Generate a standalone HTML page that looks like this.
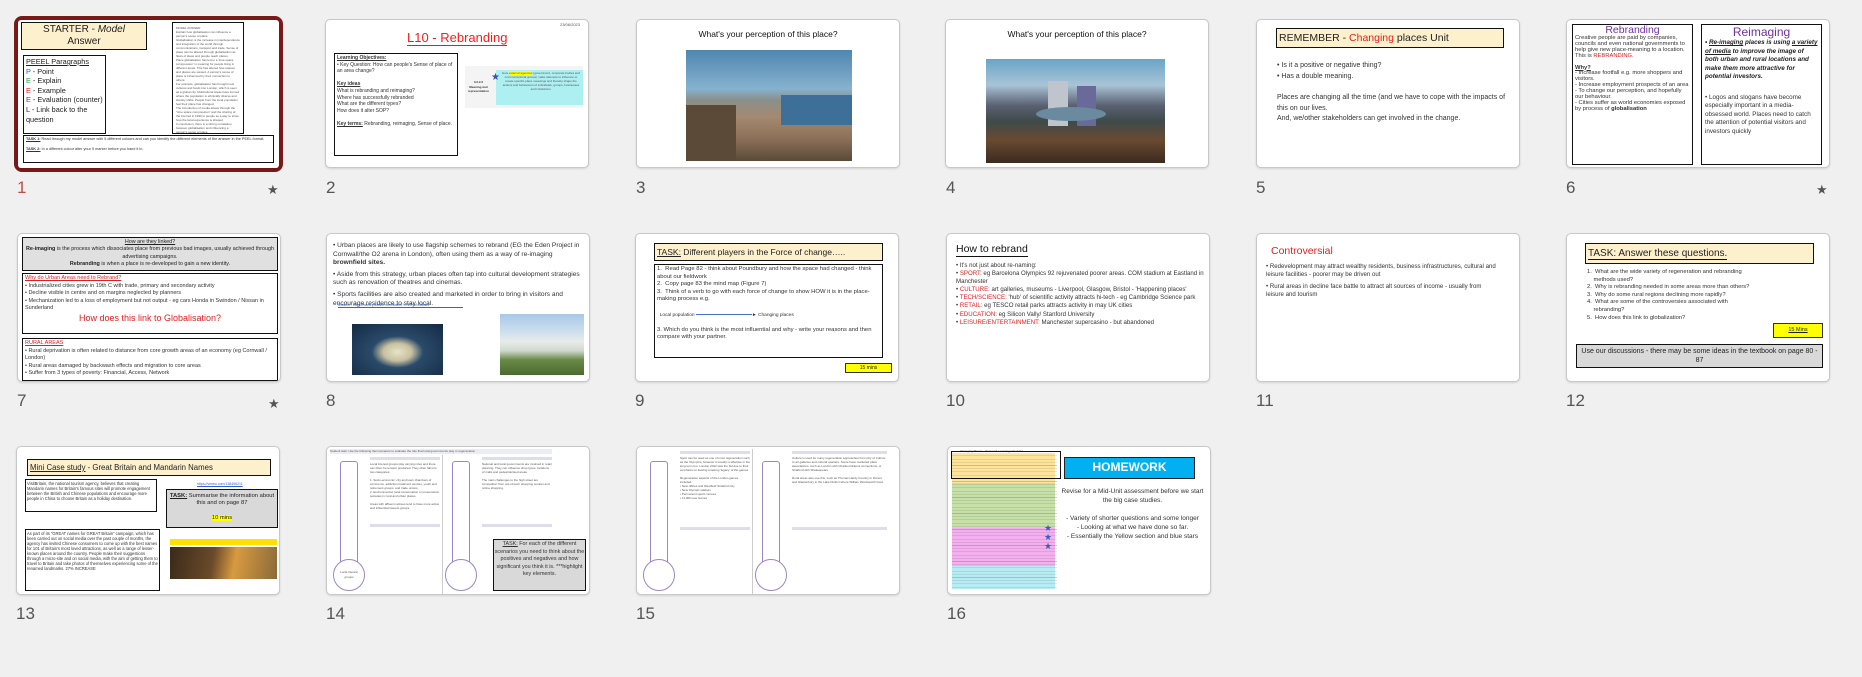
<!DOCTYPE html>
<html><head><meta charset="utf-8"><style>
*{margin:0;padding:0;box-sizing:border-box}
body{width:1862px;height:677px;background:#f0f0f0;font-family:"Liberation Sans",sans-serif;position:relative;overflow:hidden;color:#222}
.s{position:absolute;width:264px;height:149px;background:#fff;border:1px solid #c8c8c8;border-radius:5px;box-shadow:0 1px 2px rgba(0,0,0,.12);overflow:hidden}
.a{position:absolute}
.n{position:absolute;font-size:17px;color:#555}
.st{position:absolute;font-size:13px;color:#555}
.bx{position:absolute;border:1.5px solid #111;overflow:hidden}
.tiny{font-size:3.5px;line-height:4.5px;color:#555}
.r{color:#e02020}
</style></head><body>

<div class="a" style="left:14px;top:16px;width:269px;height:156px;border:4px solid #7b1818;border-radius:8px"></div>

<!-- ROW 1 -->
<div class="s" style="left:18px;top:20px;width:261px;height:148px;border:none;border-radius:3px">
 <div class="bx" style="left:3px;top:2px;width:126px;height:28px;background:#fdf0cc;font-size:10px;line-height:12px;text-align:center;padding-top:1px">STARTER - <i>Model</i><br>Answer</div>
 <div class="bx" style="left:5px;top:35px;width:83px;height:79px;font-size:7.3px;line-height:9.6px;padding:1px 2px">
  <u>PEEEL Paragraphs</u><br><span style="color:#2266cc">P</span> - Point<br><span style="color:#22aa44">E</span> - Explain<br><span class="r">E</span> - Example<br><span style="color:#7030a0">E</span> - Evaluation (counter)<br>L - Link back to the question</div>
 <div class="bx" style="left:154px;top:2px;width:72px;height:112px;border-width:1px;padding:3px">
  <div class="tiny" style="font-size:3px;line-height:4px">MODEL ANSWER<br>Explain how globalisation can influence a person's sense of place.<br>Globalisation is the increase in interdependence and integration of the world through communications, transport and trade. Sense of place can be altered through globalisation as flows of ideas and people reach places.<br>Place globalisation has led to a 'time-space compression' in meaning for people living in different areas. This has altered how spaces and places are viewed. A person's sense of place is influenced by their connection to others.<br>For example, globalisation has brought new cultures and foods into London, which is seen as a global city. Multicultural areas have formed where the population is ethnically diverse and identity shifts. People from the local population feel their place has changed.<br>The introduction of media allows through the "time space compression" and the sharing of the internet in 1990 to people as a way to show how the local experience is shaped.<br>In conclusion, there is a strong correlation between globalisation and influencing a person's sense of place.</div></div>
 <div class="bx" style="left:5px;top:115px;width:251px;height:28px;padding:1px 2px"><div class="tiny" style="font-size:3.8px;line-height:4.8px;color:#333"><u><b>TASK 1:</b></u> Read through my model answer with 5 different colours and can you identify the different elements of the answer in the PEEL format.<br><br><u><b>TASK 2:</b></u> In a different colour alter your 9 marker before you hand it in.</div></div>
</div>
<div class="n" style="left:17px;top:178px;color:#c0504d">1</div>
<div class="st" style="left:267px;top:182px">★</div>

<div class="s" style="left:325px;top:19px">
 <div class="a tiny" style="right:8px;top:3px;font-size:4px">23/06/2023</div>
 <div class="a" style="left:81px;top:10px;font-size:13px;color:#ff1a1a;border-bottom:1px solid #e02020;line-height:15px">L10 - Rebranding</div>
 <div class="bx" style="left:8px;top:33px;width:124px;height:103px;padding:1px 2px;font-size:5px;line-height:6.6px;color:#333">
  <u><b>Learning Objectives:</b></u><br>• Key Question: How can people's Sense of place of an area change?<br><br><u><b>Key ideas</b></u><br>What is rebranding and reimaging?<br>Where has successfully rebranded<br>What are the different types?<br>How does it alter SOP?<br><br><u><b>Key terms:</b></u> Rebranding, reimaging, Sense of place.</div>
 <div class="a" style="left:139px;top:46px;width:118px;height:42px;background:#f4f4f4">
  <div class="a" style="left:31px;top:4px;width:87px;height:35px;background:#aef0f2"></div>
  <div class="a tiny" style="left:3px;top:14px;font-size:3px;text-align:center;font-weight:bold;color:#333">3.2.2.2<br>Meaning and<br>representation</div>
  <div class="a" style="left:26px;top:6px;color:#3355aa;font-size:10px">★</div>
  <div class="a tiny" style="left:36px;top:5px;width:80px;font-size:3px;line-height:4px;text-align:center">How <span style="background:#ff0">external agencies</span> (government, corporate bodies and community/local groups) make attempts to influence or create specific place meanings and thereby shape the actions and behaviours of individuals, groups, businesses and institutions.</div>
 </div>
</div>
<div class="n" style="left:326px;top:178px">2</div>

<div class="s" style="left:636px;top:19px">
 <div class="a" style="left:0;width:100%;top:9px;text-align:center;font-size:8.5px;color:#111">What's your perception of this place?</div>
 <div class="a" style="left:49px;top:30px;width:166px;height:111px;background:linear-gradient(180deg,#4f86b0 0%,#86b2cf 35%,#8a8f8c 45%,#a48a70 60%,#8c7058 80%,#5a4a3a 100%)">
  <div class="a" style="left:95px;top:45px;width:71px;height:30px;background:#3d6f98"></div>
  <div class="a" style="left:0;top:55px;width:50px;height:56px;background:#5b4a38"></div>
 </div>
</div>
<div class="n" style="left:636px;top:178px">3</div>

<div class="s" style="left:945px;top:19px">
 <div class="a" style="left:0;width:100%;top:9px;text-align:center;font-size:8.5px;color:#111">What's your perception of this place?</div>
 <div class="a" style="left:40px;top:39px;width:179px;height:104px;background:linear-gradient(180deg,#6aa4c8 0%,#a8c4d6 25%,#5a6070 45%,#3e4a4a 60%,#6a4a30 78%,#3a2a20 100%)">
  <div class="a" style="left:62px;top:22px;width:20px;height:45px;background:#c0c4cc"></div>
  <div class="a" style="left:91px;top:27px;width:19px;height:40px;background:#6a6a9a"></div>
  <div class="a" style="left:50px;top:48px;width:70px;height:14px;border-radius:50%;background:#6a8aa0"></div>
 </div>
</div>
<div class="n" style="left:946px;top:178px">4</div>

<div class="s" style="left:1256px;top:19px">
 <div class="bx" style="left:19px;top:8px;width:228px;height:20px;background:#fdf0cc;font-size:10.5px;line-height:18px;padding-left:2px">REMEMBER - <span class="r">Changing</span> places Unit</div>
 <div class="a" style="left:20px;top:40px;font-size:7px;line-height:11px;color:#333">• Is it a positive or negative thing?<br>• Has a double meaning.</div>
 <div class="a" style="left:20px;top:73px;font-size:7px;line-height:10.5px;width:235px;color:#333">Places are changing all the time (and we have to cope with the impacts of this on our lives.<br>And, we/other stakeholders can get involved in the change.</div>
</div>
<div class="n" style="left:1256px;top:178px">5</div>

<div class="s" style="left:1566px;top:19px">
 <div class="bx" style="left:5px;top:4px;width:121px;height:141px;padding:0 2px">
  <div style="text-align:center;color:#7030a0;font-size:10.5px;line-height:11px">Rebranding</div>
  <div style="font-size:5.8px;line-height:5.9px;color:#333">Creative people are paid by companies, councils and even national governments to help give new place-meaning to a location. This is <span class="r">REBRANDING.</span><br><br><b><u>Why?</u></b><br>- Increase footfall e.g. more shoppers and visitors.<br>- Increase employment prospects of an area<br>- To change our perception, and hopefully our behaviour.<br>- Cities suffer as world economies exposed by process of <b>globalisation</b></div></div>
 <div class="bx" style="left:134px;top:4px;width:121px;height:141px;padding:0 3px">
  <div style="text-align:center;color:#7030a0;font-size:12px;line-height:14px">Reimaging</div>
  <div style="font-size:6.3px;line-height:8.5px;color:#222;font-style:italic;font-weight:bold">• <u>Re-imaging</u> places is using <u>a variety of media</u> to improve the image of both urban and rural locations and make them more attractive for potential investors.</div>
  <div style="font-size:6.3px;line-height:8.5px;color:#333;margin-top:12px">• Logos and slogans have become especially important in a media-obsessed world. Places need to catch the attention of potential visitors and investors quickly</div></div>
</div>
<div class="n" style="left:1566px;top:178px">6</div>
<div class="st" style="left:1816px;top:182px">★</div>

<!-- ROW 2 -->
<div class="s" style="left:17px;top:233px">
 <div class="bx" style="left:4px;top:3px;width:256px;height:34px;background:#e0e0e0;text-align:center;font-size:5.4px;line-height:7.4px;padding-top:1px"><u>How are they linked?</u><br><b>Re-imaging</b> is the process which dissociates place from previous bad images, usually achieved through advertising campaigns.<br><b>Rebranding</b> is when a place is re-developed to gain a new identity.</div>
 <div class="bx" style="left:4px;top:39px;width:256px;height:61px;padding:1px 2px;font-size:5.5px;line-height:7.6px;color:#333"><u class="r">Why do Urban Areas need to Rebrand?</u><br>• Industrialized cities grew in 19th C with trade, primary and secondary activity<br>• Decline visible in centre and on margins neglected by planners<br>• Mechanization led to a loss of employment but not output - eg cars Honda in Swindon / Nissan in Sunderland<div class="r" style="text-align:center;font-size:9px;line-height:11px">How does this link to Globalisation?</div></div>
 <div class="bx" style="left:4px;top:104px;width:256px;height:43px;padding:1px 2px;font-size:5.5px;line-height:7.6px;color:#333"><u class="r">RURAL AREAS</u><br>• Rural deprivation is often related to distance from core growth areas of an economy (eg Cornwall / London)<br>• Rural areas damaged by backwash effects and migration to core areas<br>• Suffer from 3 types of poverty: Financial, Access, Network</div>
</div>
<div class="n" style="left:17px;top:391px">7</div>
<div class="st" style="left:268px;top:396px">★</div>

<div class="s" style="left:326px;top:233px">
 <div class="a" style="left:6px;top:8px;width:250px;font-size:6.6px;line-height:8.6px;color:#333">• Urban places are likely to use flagship schemes to rebrand (EG the Eden Project in Cornwall/the O2 arena in London), often using them as a way of re-imaging <b>brownfield sites.</b><div style="height:3px"></div>• Aside from this strategy, urban places often tap into cultural development strategies such as renovation of theatres and cinemas.<div style="height:3px"></div>• Sports facilities are also created and marketed in order to bring in visitors and encourage residence to stay local.</div>
 <div class="a" style="left:11px;top:73px;width:125px;height:1px;background:#3366cc"></div>
 <div class="a tiny" style="left:11px;top:69px;color:#3366cc">Mission - https://www.youtube.com/watch?v=1C9hN3bfaks</div>
 <div class="a" style="left:25px;top:90px;width:91px;height:51px;background:radial-gradient(ellipse at 50% 55%,#e8e4c8 0%,#c8c0a0 22%,#2a4a6a 40%,#142a44 100%)"></div>
 <div class="a" style="left:173px;top:80px;width:84px;height:61px;background:linear-gradient(180deg,#a8c8e8 0%,#cfe0ee 30%,#e8ece8 45%,#d0d8d0 60%,#6a8a48 75%,#4a6a30 100%)"></div>
</div>
<div class="n" style="left:326px;top:391px">8</div>

<div class="s" style="left:635px;top:233px">
 <div class="bx" style="left:18px;top:9px;width:229px;height:18px;background:#fdf0cc;font-size:8.5px;line-height:16px;padding-left:2px"><u>TASK:</u> Different players in the Force of change…..</div>
 <div class="bx" style="left:18px;top:30px;width:229px;height:94px;padding:1px 2px;font-size:5.9px;line-height:7.6px;color:#333">1.&nbsp; Read Page 82 - think about Poundbury and how the space had changed - think about our fieldwork<br>2.&nbsp; Copy page 83 the mind map (Figure 7)<br>3.&nbsp; Think of a verb to go with each force of change to show HOW it is in the place-making process e.g.<br><br><span style="font-size:4.8px">&nbsp;&nbsp;Local population <span style="display:inline-block;width:56px;height:1.5px;background:#4472c4;vertical-align:middle"></span>► Changing places</span><br><br>3. Which do you think is the most influential and why - write your reasons and then compare with your partner.</div>
 <div class="a" style="left:209px;top:129px;width:47px;height:10px;background:#ffff00;border:1px solid #333;font-size:5px;text-align:center;line-height:8px">15 mins</div>
</div>
<div class="n" style="left:635px;top:391px">9</div>

<div class="s" style="left:946px;top:233px">
 <div class="a" style="left:9px;top:9px;font-size:10.5px;color:#111;border-bottom:1.5px solid #111;line-height:13px">How to rebrand</div>
 <div class="a" style="left:9px;top:28px;width:250px;font-size:6.1px;line-height:8.1px;color:#333">• It's not just about re-naming:<br>• <span class="r">SPORT:</span> eg Barcelona Olympics 92 rejuvenated poorer areas. COM stadium at Eastland in Manchester<br>• <span class="r">CULTURE:</span> art galleries, museums - Liverpool, Glasgow, Bristol - 'Happening places'<br>• <span class="r">TECH/SCIENCE:</span> 'hub' of scientific activity attracts hi-tech - eg Cambridge Science park<br>• <span class="r">RETAIL:</span> eg TESCO retail parks attracts activity in may UK cities<br>• <span class="r">EDUCATION:</span> eg Silicon Vally/ Stanford University<br>• <span class="r">LEISURE/ENTERTAINMENT:</span> Manchester supercasino - but abandoned</div>
</div>
<div class="n" style="left:946px;top:391px">10</div>

<div class="s" style="left:1256px;top:233px">
 <div class="a r" style="left:14px;top:11px;font-size:10.5px">Controversial</div>
 <div class="a" style="left:9px;top:29px;width:235px;font-size:6.1px;line-height:8px;color:#333">• Redevelopment may attract wealthy residents, business infrastructures, cultural and leisure facilities - poorer may be driven out<div style="height:4px"></div>• Rural areas in decline face battle to attract alt sources of income - usually from leisure and tourism</div>
</div>
<div class="n" style="left:1256px;top:391px">11</div>

<div class="s" style="left:1566px;top:233px">
 <div class="bx" style="left:18px;top:9px;width:229px;height:21px;background:#fdf0cc;font-size:10px;line-height:19px;padding-left:2px"><span style="border-bottom:1px solid #111">TASK: Answer these questions.</span></div>
 <div class="a" style="left:20px;top:35px;width:225px;font-size:5.8px;line-height:7.6px;color:#333">1.&nbsp; What are the wide variety of regeneration and rebranding<br>&nbsp;&nbsp;&nbsp;&nbsp;methods used?<br>2.&nbsp; Why is rebranding needed in some areas more than others?<br>3.&nbsp; Why do some rural regions declining more rapidly?<br>4.&nbsp; What are some of the controversies associated with<br>&nbsp;&nbsp;&nbsp;&nbsp;rebranding?<br>5.&nbsp; How does this link to globalization?</div>
 <div class="a" style="left:206px;top:89px;width:50px;height:15px;background:#ffff00;border:1px solid #333;font-size:5.5px;text-align:center;line-height:13px"><u>15 Mins</u></div>
 <div class="bx" style="left:9px;top:110px;width:247px;height:24px;background:#d9d9d9;font-size:7px;line-height:9px;text-align:center;padding-top:2px">Use our discussions - there may be some ideas in the textbook on page 80 - 87</div>
</div>
<div class="n" style="left:1566px;top:391px">12</div>

<!-- ROW 3 -->
<div class="s" style="left:16px;top:446px">
 <div class="bx" style="left:10px;top:12px;width:244px;height:17px;background:#fdf0cc;font-size:7.8px;line-height:15px;padding-left:2px"><u>Mini Case study</u> - Great Britain and Mandarin Names</div>
 <div class="bx" style="left:8px;top:32px;width:132px;height:33px;padding:1px;font-size:4.1px;line-height:5px;color:#333">VisitBritain, the national tourism agency, believes that creating Mandarin names for Britain's famous sites will promote engagement between the British and Chinese populations and encourage more people in China to choose Britain as a holiday destination.</div>
 <div class="a tiny" style="left:180px;top:35px;color:#3366cc;text-decoration:underline">https://vimeo.com/138456211</div>
 <div class="bx" style="left:149px;top:42px;width:112px;height:39px;background:#d9d9d9;font-size:5.8px;line-height:7.4px;text-align:center;padding-top:3px"><u><b>TASK:</b></u> Summarise the information about this and on page 87<br><br><span style="background:#ff0">10 mins</span></div>
 <div class="bx" style="left:8px;top:82px;width:135px;height:62px;padding:1px;font-size:4.1px;line-height:5px;color:#333">As part of its "GREAT names for GREAT Britain" campaign, which has been carried out on social media over the past couple of months, the agency has invited Chinese consumers to come up with the best names for 101 of Britain's most loved attractions, as well as a range of lesser-known places around the country. People make their suggestions through a micro-site and on social media, with the aim of getting them to travel to Britain and take photos of themselves experiencing some of the renamed landmarks. 27% INCREASE</div>
 <div class="a" style="left:153px;top:87px;width:107px;height:45px;background:#fff">
  <div class="a" style="left:0;top:5px;width:107px;height:6px;background:#ffe000"></div>
  <div class="a" style="left:0;top:13px;width:107px;height:32px;background:linear-gradient(100deg,#3a2a1a 0%,#6a4a2a 40%,#d89a40 60%,#8a6a3a 100%)"></div>
 </div>
</div>
<div class="n" style="left:16px;top:604px">13</div>

<div class="s" style="left:326px;top:446px">
 <div class="a tiny" style="left:3px;top:2px;width:222px;background:#ececf4;font-size:3px">Student task: Use the following thermometers to evaluate the role that local governments play in regeneration</div>
 <div class="a" style="left:3px;top:8px;width:113px;height:140px;border-right:1px solid #ccc"></div>
 <div class="a" style="left:13px;top:14px;width:18px;height:105px;border:1px solid #9a88c0;border-bottom:none;border-radius:3px 3px 0 0"></div>
 <div class="a" style="left:6px;top:112px;width:32px;height:32px;border:1px solid #9a88c0;border-radius:50%;background:#fff"></div>
 <div class="a tiny" style="left:12px;top:123px;font-size:3px;text-align:center;width:20px">Local interest groups</div>
 <div class="a" style="left:125px;top:14px;width:18px;height:105px;border:1px solid #9a88c0;border-bottom:none;border-radius:3px 3px 0 0"></div>
 <div class="a" style="left:118px;top:112px;width:32px;height:32px;border:1px solid #9a88c0;border-radius:50%;background:#fff"></div>
 <div class="a" style="left:43px;top:10px;width:70px;height:3px;background:#e0dcea"></div>
 <div class="a tiny" style="left:43px;top:15px;width:70px;font-size:3px;line-height:4px">Local interest groups play varying roles and there can often be tension produced. They often fall into two categories:<br><br>1. Socio-economic: city and town chambers of commerce, addiction treatment centres, youth and retirement groups, and trade unions.<br>2. Environmental: local conservation or preservation societies in rural and urban places.<br><br>Areas with affluent retirees tend to have more active and influential interest groups.</div>
 <div class="a" style="left:43px;top:77px;width:70px;height:3px;background:#e0dcea"></div>
 <div class="a" style="left:155px;top:10px;width:70px;height:3px;background:#e0dcea"></div>
 <div class="a tiny" style="left:155px;top:15px;width:70px;font-size:3px;line-height:4px">National and local governments are involved in retail planning. They can influence shop types, locations of malls and pedestrianised areas.<br><br>The main challenges to the high street are competition from out-of-town shopping centres and online shopping.</div>
 <div class="a" style="left:155px;top:77px;width:70px;height:3px;background:#e0dcea"></div>
 <div class="bx" style="left:166px;top:92px;width:93px;height:52px;background:#d9d9d9;font-size:5.4px;line-height:7.6px;text-align:center;padding-top:1px;color:#333"><u>TASK:</u> For each of the different scenarios you need to think about the positives and negatives and how significant you think it is. ***highlight key elements.</div>
</div>
<div class="n" style="left:326px;top:604px">14</div>

<div class="s" style="left:636px;top:446px">
 <div class="a" style="left:3px;top:2px;width:113px;height:145px;border-right:1px solid #ccc"></div>
 <div class="a" style="left:13px;top:14px;width:18px;height:105px;border:1px solid #9a88c0;border-bottom:none;border-radius:3px 3px 0 0"></div>
 <div class="a" style="left:6px;top:112px;width:32px;height:32px;border:1px solid #9a88c0;border-radius:50%;background:#fff"></div>
 <div class="a" style="left:125px;top:14px;width:18px;height:105px;border:1px solid #9a88c0;border-bottom:none;border-radius:3px 3px 0 0"></div>
 <div class="a" style="left:118px;top:112px;width:32px;height:32px;border:1px solid #9a88c0;border-radius:50%;background:#fff"></div>
 <div class="a" style="left:43px;top:4px;width:70px;height:3px;background:#e0dcea"></div>
 <div class="a tiny" style="left:43px;top:9px;width:70px;font-size:3px;line-height:4px">Sport can be used as one of most regeneration such as the Olympics, however it usually is effective in the long term too. London 2012 saw the bid due to their emphasis on leaving a lasting 'legacy' of the games.<br><br>Regeneration aspects of the London games included:<br>• New offices and Westfield Stratford City<br>• New Olympic stadium<br>• Permanent sports venues<br>• 11,000 new homes</div>
 <div class="a" style="left:43px;top:80px;width:70px;height:3px;background:#e0dcea"></div>
 <div class="a" style="left:155px;top:4px;width:95px;height:3px;background:#e0dcea"></div>
 <div class="a tiny" style="left:155px;top:9px;width:95px;font-size:3px;line-height:4px">Culture is used for many regeneration approaches from City of Culture to art galleries and cultural quarters. Some have marketed place associations, such as London with Charles Dickens connections, or Stratford with Shakespeare.<br><br>Rural areas also use this, such as Thomas Hardy Country in Dorset and Glastonbury in the Lake District where William Wordsworth lived.</div>
 <div class="a" style="left:155px;top:80px;width:95px;height:3px;background:#e0dcea"></div>
</div>
<div class="n" style="left:636px;top:604px">15</div>

<div class="s" style="left:947px;top:446px">
 <div class="a tiny" style="left:12px;top:2px;font-size:3px">Changing Places - Personal Learning Checklist</div>
 <div class="a" style="left:4px;top:6px;width:103px;height:30px;background:#fde49a"></div>
 <div class="a" style="left:4px;top:36px;width:103px;height:45px;background:#c6e0a8"></div>
 <div class="a" style="left:4px;top:81px;width:103px;height:38px;background:#f4b0ee"></div>
 <div class="a" style="left:4px;top:119px;width:103px;height:23px;background:#b8ecf4"></div>
 <div class="a" style="left:4px;top:6px;width:105px;height:136px;background:repeating-linear-gradient(180deg,transparent 0,transparent 2.6px,rgba(0,0,0,.18) 2.6px,rgba(0,0,0,.18) 3.2px)"></div>
 <div class="a" style="left:3px;top:4px;width:110px;height:28px;border:1.2px solid #111"></div>
 <div class="a" style="left:96px;top:77px;color:#3a5cc0;font-size:9px;line-height:9px">★<br>★<br>★</div>
 <div class="a" style="left:116px;top:10px;width:131px;height:22px;background:#00b0f0;border:1.5px solid #222;color:#fff;font-size:12px;text-align:center;line-height:19px;font-weight:bold">HOMEWORK</div>
 <div class="a" style="left:112px;top:40px;width:145px;text-align:center;font-size:6.5px;line-height:9px;color:#333">Revise for a Mid-Unit assessment before we start the big case studies.<br><br>- Variety of shorter questions and some longer<br>- Looking at what we have done so far.<br>- Essentially the Yellow section and blue stars</div>
</div>
<div class="n" style="left:947px;top:604px">16</div>

</body></html>
